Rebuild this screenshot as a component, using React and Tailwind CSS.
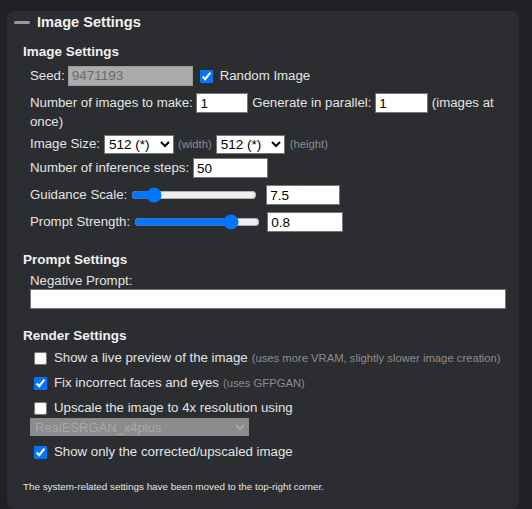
import React from "react";

function Check({ checked }) {
  return (
    <input
      type="checkbox"
      defaultChecked={checked}
      className="m-0 h-[13px] w-[13px] accent-[#0075ff]"
    />
  );
}

function TextBox({ value, className = "" }) {
  return (
    <input
      type="text"
      defaultValue={value}
      className={`h-[20px] border border-[#767676] bg-white px-[3px] text-[13.5px] leading-[18px] text-black outline-none ${className}`}
    />
  );
}

function Slider({ value, min, max, step, className = "" }) {
  return (
    <input
      type="range"
      min={min}
      max={max}
      step={step}
      defaultValue={value}
      className={`m-0 h-[16px] accent-[#0075ff] ${className}`}
    />
  );
}

function Note({ children, className = "" }) {
  return <span className={`text-[11.25px] text-[#8c8c8c] ${className}`}>{children}</span>;
}

export default function App() {
  return (
    <div className="min-h-[509px] w-[532px] bg-[#202124] pt-[5px] pl-[7px] font-['Liberation_Sans',Arial,sans-serif] text-[13.25px] leading-[20px] text-[#e4e4e4]">
      <div className="h-[498px] w-[512px] rounded-[8px] bg-[#2c2d31]">
        <div className="mt-[6px] flex h-[22px] items-center pl-[7px]">
          <span className="h-[3px] w-[16px] rounded-[2px] bg-[#9a9a9a]" />
          <h3 className="ml-[7px] text-[14.6px] font-bold leading-[22px] text-[#f0f0f0]">Image Settings</h3>
        </div>

        <div className="pl-[16px] pr-[13px]">
          <h4 className="mt-[11px] text-[13.5px] font-bold leading-[16px] text-[#f0f0f0]">Image Settings</h4>

          <div className="pl-[7px]">
            <div className="mt-[6px] flex h-[20px] items-center">
              <span>Seed:</span>
              <input
                type="text"
                disabled
                defaultValue="9471193"
                className="ml-[3px] h-[20px] w-[125px] border border-[#9a9a9a] bg-[#ababab] px-[3px] text-[13.5px] text-[#6d6d6d]"
              />
              <span className="ml-[7px] flex items-center">
                <Check checked />
                <span className="ml-[7px]">Random Image</span>
              </span>
            </div>

            <div className="mt-[7px] leading-[17px]">
              Number of images to make:{" "}
              <TextBox value="1" className="w-[52px] align-middle" />{" "}
              Generate in parallel:{" "}
              <TextBox value="1" className="w-[53px] align-middle" />{" "}
              (images at once)
            </div>

            <div className="mt-[4px] flex h-[20px] items-center">
              <span>Image Size:</span>
              <select className="ml-[4px] h-[19px] w-[70px] border border-[#767676] bg-white text-[13.5px] text-black">
                <option>512 (*)</option>
              </select>
              <Note className="ml-[4px]">(width)</Note>
              <select className="ml-[4px] h-[19px] w-[69px] border border-[#767676] bg-white text-[13.5px] text-black">
                <option>512 (*)</option>
              </select>
              <Note className="ml-[5px]">(height)</Note>
            </div>

            <div className="mt-[4px] flex h-[20px] items-center">
              <span>Number of inference steps:</span>
              <TextBox value="50" className="ml-[4px] w-[75px]" />
            </div>

            <div className="mt-[7px] flex h-[20px] items-center">
              <span>Guidance Scale:</span>
              <Slider value={7.5} min={1.1} max={50} step={0.1} className="ml-[4px] w-[126px]" />
              <TextBox value="7.5" className="ml-[9px] w-[74px]" />
            </div>

            <div className="mt-[7px] flex h-[20px] items-center">
              <span>Prompt Strength:</span>
              <Slider value={0.8} min={0} max={0.99} step={0.01} className="ml-[4px] w-[126px]" />
              <TextBox value="0.8" className="ml-[7px] w-[76px]" />
            </div>
          </div>

          <h4 className="mt-[20px] text-[13.5px] font-bold leading-[16px] text-[#f0f0f0]">Prompt Settings</h4>
          <div className="pl-[7px]">
            <div className="mt-[5px] leading-[16px]">Negative Prompt:</div>
            <TextBox value="" className="block w-[476px]" />
          </div>

          <h4 className="mt-[19px] text-[13.5px] font-bold leading-[16px] text-[#f0f0f0]">Render Settings</h4>
          <div className="pl-[7px]">
            <div className="mt-[4px] flex h-[20px] items-center pl-[4px]">
              <Check />
              <span className="ml-[7px]">Show a live preview of the image</span>
              <Note className="ml-[4px]">(uses more VRAM, slightly slower image creation)</Note>
            </div>
            <div className="mt-[5px] flex h-[20px] items-center pl-[4px]">
              <Check checked />
              <span className="ml-[7px]">Fix incorrect faces and eyes</span>
              <Note className="ml-[4px]">(uses GFPGAN)</Note>
            </div>
            <div className="mt-[5px] flex h-[20px] items-center pl-[4px]">
              <Check />
              <span className="ml-[7px]">Upscale the image to 4x resolution using</span>
            </div>
            <select
              disabled
              className="block h-[18px] w-[219px] border border-[#8a8a8a] bg-[#8c8c8c] text-[13px] leading-[16px] text-[#a8a8a8]"
            >
              <option>RealESRGAN_x4plus</option>
            </select>
            <div className="mt-[6px] flex h-[20px] items-center pl-[4px]">
              <Check checked />
              <span className="ml-[7px]">Show only the corrected/upscaled image</span>
            </div>
          </div>

          <p className="mt-[18px] text-[9.85px] leading-[14px] text-[#e4e4e4]">
            The system-related settings have been moved to the top-right corner.
          </p>
        </div>
      </div>
    </div>
  );
}
